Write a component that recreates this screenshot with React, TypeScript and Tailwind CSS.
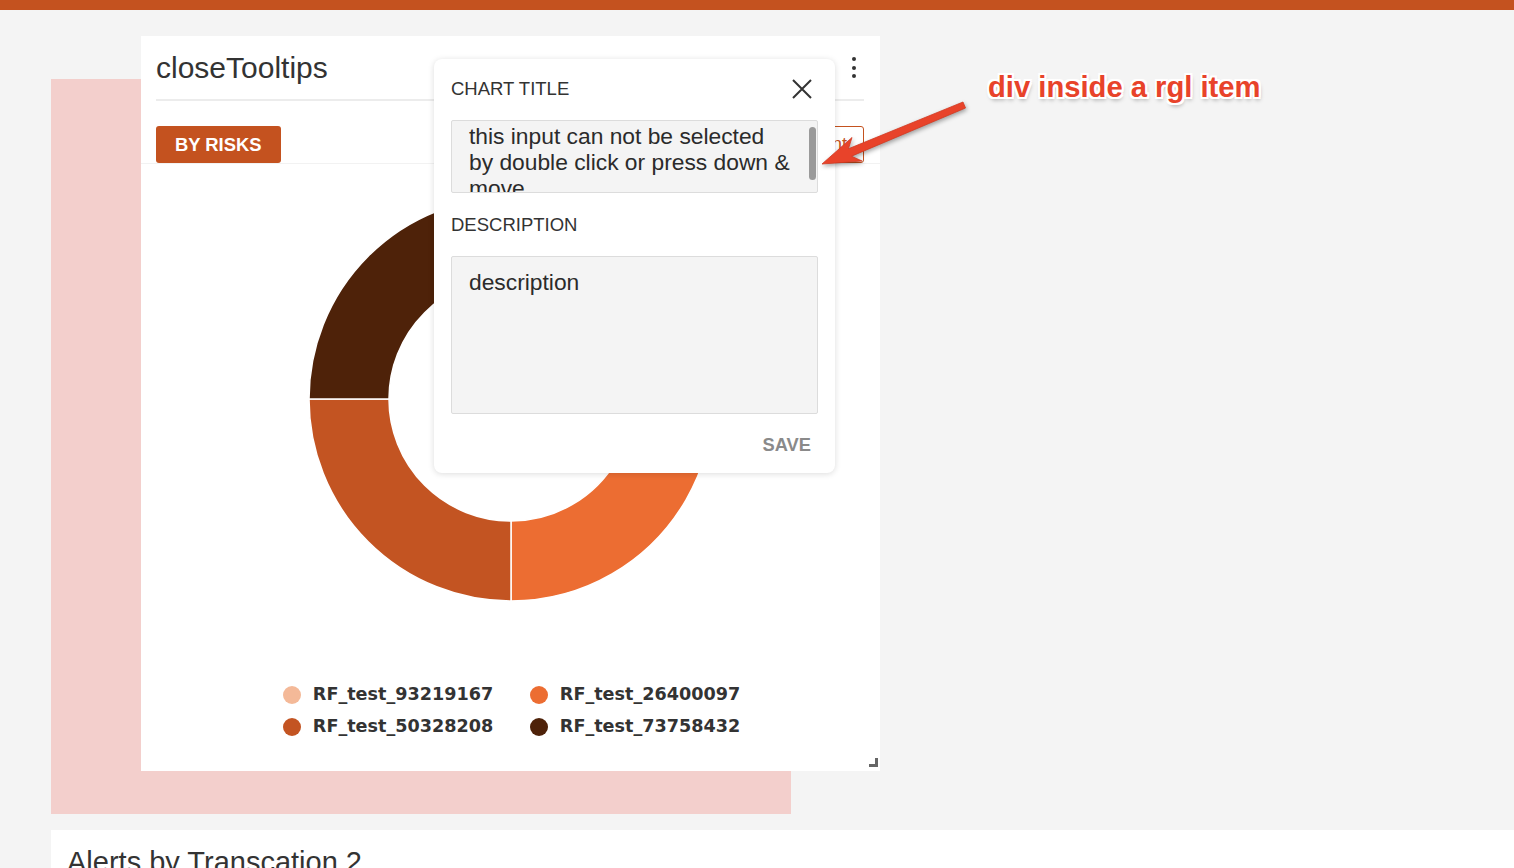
import React from 'react'

const slices = [
  { name: 'RF_test_93219167', color: '#f4b998', from: 0, to: 60 },
  { name: 'RF_test_26400097', color: '#ec6d32', from: 60, to: 180 },
  { name: 'RF_test_50328208', color: '#c35422', from: 180, to: 270 },
  { name: 'RF_test_73758432', color: '#4e2209', from: 270, to: 360 },
]

const R = 202
const r = 122
const C = 202

function pt(deg: number, rad: number) {
  const a = (deg * Math.PI) / 180
  return `${(C + rad * Math.sin(a)).toFixed(2)} ${(C - rad * Math.cos(a)).toFixed(2)}`
}

function arcPath(from: number, to: number) {
  const large = to - from > 180 ? 1 : 0
  const end = to === 360 ? 359.99 : to
  return `M ${pt(from, R)} A ${R} ${R} 0 ${large} 1 ${pt(end, R)} L ${pt(end, r)} A ${r} ${r} 0 ${large} 0 ${pt(from, r)} Z`
}

function Donut() {
  return (
    <svg width="404" height="404" viewBox="0 0 404 404">
      {slices.map(s => (
        <path key={s.name} d={arcPath(s.from, s.to)} fill={s.color} stroke="#ffffff" strokeWidth="1.5" />
      ))}
    </svg>
  )
}

function Legend() {
  return (
    <div className="flex justify-center">
      <div className="grid grid-cols-[247px_auto] gap-y-[14px] pl-[2px]">
        {slices.map(s => (
          <div key={s.name} className="flex h-[18px] items-center gap-[12px]">
            <span className="h-[18px] w-[18px] rounded-full" style={{ backgroundColor: s.color }} />
            <span className="font-['DejaVu_Sans',sans-serif] text-[17.6px] font-bold leading-none text-[#333333]">
              {s.name}
            </span>
          </div>
        ))}
      </div>
    </div>
  )
}

function EditPopup() {
  return (
    <div className="absolute left-[293px] top-[23px] w-[401px] rounded-[8px] bg-white px-[17px] pt-[18px] pb-[16px] shadow-[0_1px_6px_rgba(0,0,0,0.14)]">
      <div className="flex h-[24px] items-center justify-between">
        <span className="text-[18.5px] leading-none text-[#333333]">CHART TITLE</span>
        <svg width="20" height="20" viewBox="0 0 20 20" className="mr-[6px]">
          <path d="M1 1 L19 19 M19 1 L1 19" stroke="#333333" strokeWidth="2" />
        </svg>
      </div>
      <div className="relative mt-[19px] h-[73px] overflow-hidden rounded-[2px] border border-[#dcdcdc] bg-[#f4f4f4] pl-[17px] pt-[2px] text-[22.8px] leading-[26px] text-[#2b2b2b]">
        <div className="whitespace-nowrap">this input can not be selected</div>
        <div className="whitespace-nowrap">by double click or press down &amp;</div>
        <div className="whitespace-nowrap">move</div>
        <div className="absolute left-[357px] top-[6px] h-[53px] w-[7px] rounded-full bg-[#9a9a9a]" />
      </div>
      <div className="mt-[20px] flex h-[24px] items-center">
        <span className="text-[18.5px] leading-none text-[#333333]">DESCRIPTION</span>
      </div>
      <div className="mt-[19px] h-[158px] rounded-[2px] border border-[#dcdcdc] bg-[#f4f4f4] pl-[17px] pt-[12px] text-[22.8px] leading-[26px] text-[#2b2b2b]">
        description
      </div>
      <div className="mt-[19px] flex h-[24px] items-center justify-end pr-[7px]">
        <span className="text-[18.3px] font-bold leading-none text-[#8a8a8a]">SAVE</span>
      </div>
    </div>
  )
}

function ChartCard() {
  return (
    <div className="absolute left-[90px] top-[-43px] flex h-[735px] w-[739px] flex-col bg-white">
      <div className="ml-[15px] mr-[16px] flex h-[65px] items-center justify-between border-b-2 border-[#ececec]">
        <span className="text-[30px] leading-none text-[#333333]">closeTooltips</span>
        <div className="mr-[8px] flex flex-col gap-[4.5px]">
          <span className="h-[4px] w-[4px] rounded-full bg-[#333333]" />
          <span className="h-[4px] w-[4px] rounded-full bg-[#333333]" />
          <span className="h-[4px] w-[4px] rounded-full bg-[#333333]" />
        </div>
      </div>
      <div className="flex items-end justify-between border-b border-[#f2f2f2] pl-[15px] pr-[16px] pt-[25px]">
        <button type="button" className="h-[37px] rounded-[3px] bg-[#c4521f] px-[19px] text-[18.4px] font-bold text-white">
          BY RISKS
        </button>
        <button type="button" className="h-[37px] rounded-[3px] border border-[#c4521f] px-[16px] text-[18px] text-[#c4521f]">
          Count
        </button>
      </div>
      <div className="mt-[33px] flex justify-center">
        <Donut />
      </div>
      <div className="mt-[85px]">
        <Legend />
      </div>
      <svg width="10" height="10" viewBox="0 0 10 10" className="absolute bottom-[4px] right-[2px]">
        <path d="M8.5 1 V8.5 H1" fill="none" stroke="#666666" strokeWidth="3" />
      </svg>
      <EditPopup />
    </div>
  )
}

function Annotation() {
  return (
    <>
      <div className="absolute left-[988px] top-[73px] text-[29.2px] font-bold leading-none text-[#e8432a] [text-shadow:-2px_-2px_0_#fff,2px_-2px_0_#fff,-2px_2px_0_#fff,2px_2px_0_#fff,0_-2px_0_#fff,0_2px_0_#fff,-2px_0_0_#fff,2px_0_0_#fff,1px_3px_4px_rgba(0,0,0,0.35)]">
        div inside a rgl item
      </div>
      <svg width="1514" height="868" className="pointer-events-none absolute left-0 top-0 drop-shadow-[1px_2px_2px_rgba(0,0,0,0.35)]">
        <path
          d="M963 102 L848.4 148.8 L852 137.5 L822 164 L862 161 L851.5 156.2 L965.5 108 Z"
          fill="#e8432a"
          stroke="#d23a22"
          strokeWidth="0.8"
          strokeLinejoin="round"
        />
      </svg>
    </>
  )
}

export default function App() {
  return (
    <div className="relative h-[868px] w-full overflow-hidden bg-[#f4f4f4] font-['Liberation_Sans',Arial,sans-serif]">
      <div className="h-[10px] bg-[#c4521f]" />
      <div className="relative ml-[51px] mt-[69px] h-[735px] w-[740px] bg-[#f3cfcc]">
        <ChartCard />
      </div>
      <div className="ml-[51px] mt-[16px] h-[60px] bg-white pl-[16px] pt-[15px]">
        <span className="text-[29px] leading-[34px] text-[#333333]">Alerts by Transcation 2</span>
      </div>
      <Annotation />
    </div>
  )
}
